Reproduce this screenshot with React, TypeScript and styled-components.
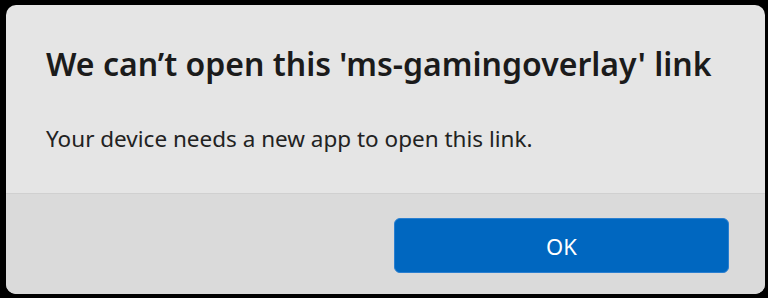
import React from 'react';
import styled, { createGlobalStyle } from 'styled-components';

const GlobalStyle = createGlobalStyle`
    html, body {
        margin: 0;
        padding: 0;
        background: #000;
    }
    body {
        font-family: 'Noto Sans', 'Open Sans', sans-serif;
    }
`;

const Screen = styled.div`
    width: 768px;
    height: 298px;
    background-color: #000;
    padding: 5px 3px 4px 6px;
    box-sizing: border-box;
    display: flex;
`;

const Dialog = styled.div`
    flex: 1;
    display: flex;
    flex-direction: column;
    background-color: #e5e5e5;
    border-radius: 10px;
    overflow: hidden;
`;

const Content = styled.div`
    height: 188px;
    box-sizing: border-box;
    padding: 39px 40px 0 40px;
    display: flex;
    flex-direction: column;
    gap: 40px;
`;

const Title = styled.h1`
    margin: 0;
    font-size: 32px;
    font-weight: 600;
    line-height: 40px;
    color: #1b1b1b;
    white-space: nowrap;
`;

const Message = styled.p`
    margin: 0;
    font-size: 22.5px;
    line-height: 30px;
    color: #222;
    white-space: nowrap;
`;

const Footer = styled.div`
    flex: 1;
    display: flex;
    justify-content: flex-end;
    align-items: flex-start;
    padding: 24px 36px 0 0;
    background-color: #dadada;
    border-top: 1px solid #d0d0d0;
`;

const Button = styled.button<{ $primary?: boolean }>`
    width: 335px;
    height: 55px;
    border: 1px solid ${p => (p.$primary ? '#2a7fd0' : '#c8c8c8')};
    border-radius: 6px;
    background-color: ${p => (p.$primary ? '#0067c0' : '#fbfbfb')};
    color: ${p => (p.$primary ? '#fff' : '#1b1b1b')};
    font-family: 'Noto Sans', 'Open Sans', sans-serif;
    font-size: 22px;
    cursor: pointer;
`;

export default function App() {
    return (
        <>
            <GlobalStyle />
            <Screen>
                <Dialog>
                    <Content>
                        <Title>We can’t open this 'ms-gamingoverlay' link</Title>
                        <Message>Your device needs a new app to open this link.</Message>
                    </Content>
                    <Footer>
                        <Button $primary>OK</Button>
                    </Footer>
                </Dialog>
            </Screen>
        </>
    );
}
